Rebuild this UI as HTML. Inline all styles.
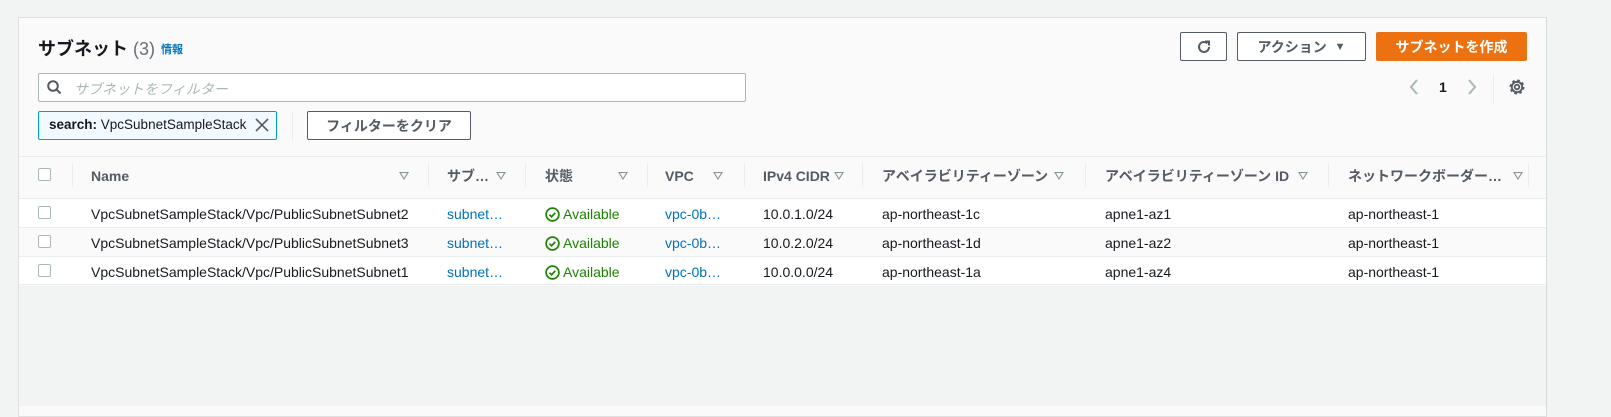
<!DOCTYPE html>
<html><head><meta charset="utf-8"><style>
*{box-sizing:border-box;margin:0;padding:0}
body{width:1611px;height:406px;background:#f2f3f3;font-family:"Liberation Sans","Noto Sans CJK JP",sans-serif;font-size:14px;color:#16191f;position:relative;overflow:hidden}
.panel{position:absolute;left:18px;top:17px;width:1529px;height:400px;background:#fafafa;border:1px solid #e0e0e0;border-right:1px solid #d5dbdb}
.abs{position:absolute}
.btn{position:absolute;border:1px solid #545b64;border-radius:2px;background:#fff;font-weight:bold;color:#545b64;font-size:14px;display:flex;align-items:center;justify-content:center}
.th{position:absolute;top:167px;font-weight:bold;color:#545b64;font-size:14px;line-height:18px}
.tri{position:absolute;top:172px;width:0;height:0;border-left:5px solid transparent;border-right:5px solid transparent;border-top:8px solid #879596}
.tri:after{content:"";position:absolute;left:-3px;top:-7px;border-left:3px solid transparent;border-right:3px solid transparent;border-top:5px solid #fafafa}
.div{position:absolute;top:163px;width:1px;height:24px;background:#eaeded}
.row{position:absolute;left:19px;width:1527px;height:29px;border-top:1px solid #eaeded}
.cell{position:absolute;top:6px;font-size:14px;line-height:18px}
.cb{position:absolute;left:19px;top:7px;width:13px;height:13px;border:1px solid #aab7b8;border-radius:2px;background:#fff}
.link{color:#0073bb}
.ok{color:#1d8102;display:flex;align-items:center;gap:3px}
</style></head><body>
<div class="panel"></div>
<div class="abs" style="left:38px;top:35px;font-size:18px;font-weight:bold">サブネット <span style="font-weight:normal;color:#687078">(3)</span></div>
<div class="abs link" style="left:161px;top:41px;font-size:11px;font-weight:bold">情報</div>

<div class="btn" style="left:1180px;top:32px;width:47px;height:29px"><svg width="16" height="16" viewBox="0 0 16 16"><path d="M13 8a5 5 0 1 1-1.6-3.7" fill="none" stroke="#545b64" stroke-width="2"/><path d="M9 2.5h4v4" fill="none" stroke="#545b64" stroke-width="2"/></svg></div>
<div class="btn" style="left:1237px;top:32px;width:129px;height:29px">アクション&nbsp;&nbsp;<span style="font-size:11px">▼</span></div>
<div class="btn" style="left:1376px;top:32px;width:151px;height:29px;background:#ec7211;border-color:#ec7211;color:#fff">サブネットを作成</div>

<div class="abs" style="left:38px;top:73px;width:708px;height:29px;border:1px solid #aab7b8;border-radius:2px;background:#fff"></div>
<svg class="abs" style="left:47px;top:80px" width="15" height="15" viewBox="0 0 15 15"><circle cx="6" cy="6" r="4.8" fill="none" stroke="#545b64" stroke-width="2"/><path d="M9.5 9.5l4 4" stroke="#545b64" stroke-width="2"/></svg>
<div class="abs" style="left:74px;top:79px;color:#aab7b8;font-style:italic">サブネットをフィルター</div>

<svg class="abs" style="left:1409px;top:79px" width="10" height="16" viewBox="0 0 10 16"><path d="M8 1L2 8l6 7" fill="none" stroke="#aab7b8" stroke-width="2"/></svg>
<div class="abs" style="left:1439px;top:79px;font-weight:bold">1</div>
<svg class="abs" style="left:1467px;top:79px" width="10" height="16" viewBox="0 0 10 16"><path d="M2 1l6 7-6 7" fill="none" stroke="#aab7b8" stroke-width="2"/></svg>
<div class="abs" style="left:1493px;top:74px;width:1px;height:30px;background:#eaeded"></div>
<svg class="abs" style="left:1509px;top:79px" width="16" height="16" viewBox="0 0 16 16"><circle cx="8" cy="8" r="2.3" fill="none" stroke="#545b64" stroke-width="1.8"/><circle cx="8" cy="8" r="5.2" fill="none" stroke="#545b64" stroke-width="1.8"/><circle cx="8" cy="8" r="6.5" fill="none" stroke="#545b64" stroke-width="2" stroke-dasharray="2.6 2.5"/></svg>

<div class="abs" style="left:38px;top:111px;width:239px;height:29px;border:1px solid #00a1c9;background:#f1faff;border-radius:2px"></div>
<div class="abs" style="left:49px;top:117px;font-size:13.5px"><b>search:</b> VpcSubnetSampleStack</div>
<svg class="abs" style="left:255px;top:118px" width="14" height="14" viewBox="0 0 14 14"><path d="M1 1l12 12M13 1L1 13" stroke="#545b64" stroke-width="1.6"/></svg>
<div class="abs" style="left:292px;top:111px;width:1px;height:30px;background:#eaeded"></div>
<div class="btn" style="left:307px;top:111px;width:164px;height:29px">フィルターをクリア</div>

<div class="abs" style="left:19px;top:156px;width:1527px;height:1px;background:#eaeded"></div>
<div class="cb" style="top:168px;left:38px"></div>
<div class="div" style="left:72px"></div>
<div class="th" style="left:91px">Name</div><div class="tri" style="left:399px"></div>
<div class="div" style="left:428px"></div>
<div class="th" style="left:447px">サブ…</div><div class="tri" style="left:496px"></div>
<div class="div" style="left:525px"></div>
<div class="th" style="left:545px">状態</div><div class="tri" style="left:618px"></div>
<div class="div" style="left:647px"></div>
<div class="th" style="left:665px">VPC</div><div class="tri" style="left:713px"></div>
<div class="div" style="left:744px"></div>
<div class="th" style="left:763px">IPv4 CIDR</div><div class="tri" style="left:834px"></div>
<div class="div" style="left:862px"></div>
<div class="th" style="left:882px">アベイラビリティーゾーン</div><div class="tri" style="left:1054px"></div>
<div class="div" style="left:1085px"></div>
<div class="th" style="left:1105px">アベイラビリティーゾーン ID</div><div class="tri" style="left:1298px"></div>
<div class="div" style="left:1328px"></div>
<div class="th" style="left:1348px">ネットワークボーダー…</div><div class="tri" style="left:1513px"></div>
<div class="div" style="left:1528px"></div>

<div class="row" style="top:198px;background:#fff"><div class="cb"></div>
<div class="cell" style="left:72px">VpcSubnetSampleStack/Vpc/PublicSubnetSubnet2</div>
<div class="cell link" style="left:428px">subnet…</div>
<div class="cell ok" style="left:526px"><svg width="15" height="15" viewBox="0 0 16 16"><circle cx="8" cy="8" r="6.8" fill="none" stroke="#1d8102" stroke-width="1.8"/><path d="M4.8 8.2l2.2 2.2 4-4.2" fill="none" stroke="#1d8102" stroke-width="1.8"/></svg>Available</div>
<div class="cell link" style="left:646px">vpc-0b…</div>
<div class="cell" style="left:744px">10.0.1.0/24</div>
<div class="cell" style="left:863px">ap-northeast-1c</div>
<div class="cell" style="left:1086px">apne1-az1</div>
<div class="cell" style="left:1329px">ap-northeast-1</div></div>
<div class="row" style="top:227px;background:#fafafa"><div class="cb"></div>
<div class="cell" style="left:72px">VpcSubnetSampleStack/Vpc/PublicSubnetSubnet3</div>
<div class="cell link" style="left:428px">subnet…</div>
<div class="cell ok" style="left:526px"><svg width="15" height="15" viewBox="0 0 16 16"><circle cx="8" cy="8" r="6.8" fill="none" stroke="#1d8102" stroke-width="1.8"/><path d="M4.8 8.2l2.2 2.2 4-4.2" fill="none" stroke="#1d8102" stroke-width="1.8"/></svg>Available</div>
<div class="cell link" style="left:646px">vpc-0b…</div>
<div class="cell" style="left:744px">10.0.2.0/24</div>
<div class="cell" style="left:863px">ap-northeast-1d</div>
<div class="cell" style="left:1086px">apne1-az2</div>
<div class="cell" style="left:1329px">ap-northeast-1</div></div>
<div class="row" style="top:256px;background:#fff;border-bottom:1px solid #eaeded"><div class="cb"></div>
<div class="cell" style="left:72px">VpcSubnetSampleStack/Vpc/PublicSubnetSubnet1</div>
<div class="cell link" style="left:428px">subnet…</div>
<div class="cell ok" style="left:526px"><svg width="15" height="15" viewBox="0 0 16 16"><circle cx="8" cy="8" r="6.8" fill="none" stroke="#1d8102" stroke-width="1.8"/><path d="M4.8 8.2l2.2 2.2 4-4.2" fill="none" stroke="#1d8102" stroke-width="1.8"/></svg>Available</div>
<div class="cell link" style="left:646px">vpc-0b…</div>
<div class="cell" style="left:744px">10.0.0.0/24</div>
<div class="cell" style="left:863px">ap-northeast-1a</div>
<div class="cell" style="left:1086px">apne1-az4</div>
<div class="cell" style="left:1329px">ap-northeast-1</div></div>
<div class="abs" style="left:19px;top:286px;width:1527px;height:120px;background:#f2f3f3"></div>
</body></html>
